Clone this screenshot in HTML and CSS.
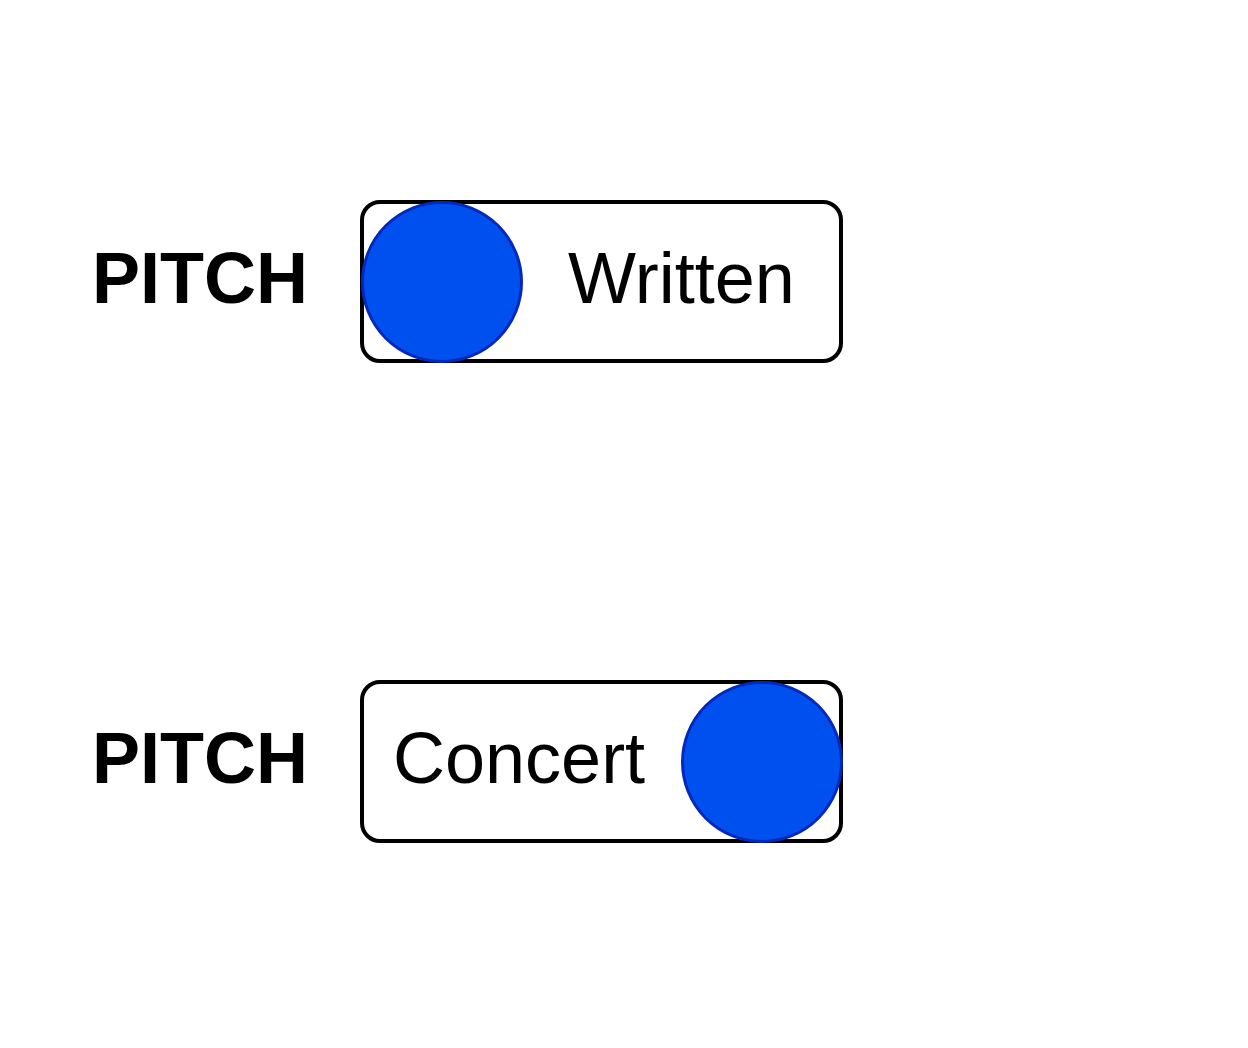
FILE: index.html
```html
<!DOCTYPE html>
<html lang="en">
<head>
    <meta charset="UTF-8">
    <meta name="viewport" content="width=device-width, initial-scale=1.0">
    <title>Pitch Toggle</title>
    <link rel="stylesheet" href="styles.css">
</head>
<body>
    <div class="container">
        <div class="row">
            <span class="label">PITCH</span>
            <div class="toggle toggle-off">
                <span class="knob"></span>
                <span class="toggle-text">Written</span>
            </div>
        </div>
        <div class="row">
            <span class="label">PITCH</span>
            <div class="toggle toggle-on">
                <span class="toggle-text">Concert</span>
                <span class="knob"></span>
            </div>
        </div>
    </div>
</body>
</html>
```

FILE: styles.css
```css
body {
    margin: 0;
    background-color: #fff;
    color: #000;
    font-family: "Liberation Sans", Arial, sans-serif;
}
.container {
    display: flex;
    flex-direction: column;
    gap: 317px;
    padding: 200px 0 0 92px;
}
.row {
    display: flex;
    align-items: center;
}
.label {
    width: 268px;
    font-size: 72px;
    font-weight: bold;
    margin-bottom: 7px; /* lift the caps to the middle of the toggle */
}
.toggle {
    box-sizing: border-box;
    width: 483px;
    height: 163px;
    border: 4px solid #000;
    border-radius: 20px;
    display: flex;
    align-items: center;
    font-size: 72px;
}
.toggle-text {
    margin-bottom: 7px;
}
.knob {
    box-sizing: border-box;
    flex: none;
    width: 162px;
    height: 162px;
    border: 3px solid #0428bb;
    border-radius: 50%;
    background-color: #0050ef; /* bright blue knob */
}
.toggle-off .knob {
    margin-left: -3px;
}
.toggle-off .toggle-text {
    margin-left: 45px;
}
.toggle-on .toggle-text {
    margin-left: 29px;
}
.toggle-on .knob {
    margin-left: auto;
    margin-right: -4px;
}
```
